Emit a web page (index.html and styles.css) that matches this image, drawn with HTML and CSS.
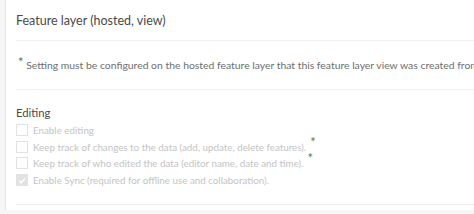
FILE: index.html
```html
<!DOCTYPE html>
<html lang="en">
<head>
    <meta charset="UTF-8">
    <title>Feature layer settings</title>
    <link rel="stylesheet" href="styles.css">
</head>
<body>
    <div class="panel">
        <h2 class="panel-title">Feature layer (hosted, view)</h2>
        <p class="note"><span class="star lead">*</span> Setting must be configured on the hosted feature layer that this feature layer view was created from.</p>
        <div class="section">
            <div class="section-title">Editing</div>
            <label class="option"><span class="box"></span>Enable editing</label>
            <label class="option"><span class="box"></span>Keep track of changes to the data (add, update, delete features).<span class="star sup">*</span></label>
            <label class="option"><span class="box"></span>Keep track of who edited the data (editor name, date and time).<span class="star sup">*</span></label>
            <label class="option"><span class="box checked">
                <svg viewBox="0 0 12 12" width="11" height="11"><path d="M2.5 6.2 L5 8.6 L9.6 3.4" fill="none" stroke="#fff" stroke-width="1.6"/></svg>
            </span>Enable Sync (required for offline use and collaboration).</label>
        </div>
    </div>
</body>
</html>
```

FILE: styles.css
```css
body {
    margin: 0;
    background-color: #f6f6f6;
    font-family: Lato, "Open Sans", sans-serif;
    overflow: hidden;
}
.panel {
    margin-left: 5px;
    height: 210px;
    background-color: #fff;
    border-left: 1px solid #e4e4e4;
    padding-left: 10px;
    white-space: nowrap;
}
.panel-title {
    margin: 0;
    font-size: 12.5px;
    font-weight: normal;
    color: #4a4a4a;
    padding: 11px 0 10px;
    line-height: 19px;
    border-bottom: 1px solid #efefef;
}
.note {
    margin: 0;
    font-size: 10.4px;
    color: #6e6e6e;
    padding: 15px 0 16px;
    line-height: 16px;
    border-bottom: 1px solid #efefef;
}
.star {
    color: #3f8653;
    font-size: 13px;
    position: relative;
}
.lead {
    top: -2px;
    margin-left: 2px;
}
.sup {
    top: -5px;
    margin-left: 4px;
}
.section {
    padding: 15px 0 16px;
    border-bottom: 1px solid #ececec;
}
.section-title {
    font-size: 11.3px;
    color: #4a4a4a;
    line-height: 15px;
    margin-bottom: 2px;
}
.option {
    display: flex;
    align-items: center;
    height: 16.6px;
    font-size: 9.8px;
    color: #c4c4c4;
}
.box {
    width: 10px;
    height: 10px;
    border: 1px solid #e2e2e2;
    margin-right: 5px;
    display: flex;
    align-items: center;
    justify-content: center;
}
.box.checked {
    background-color: #e2e2e2;
}
```
